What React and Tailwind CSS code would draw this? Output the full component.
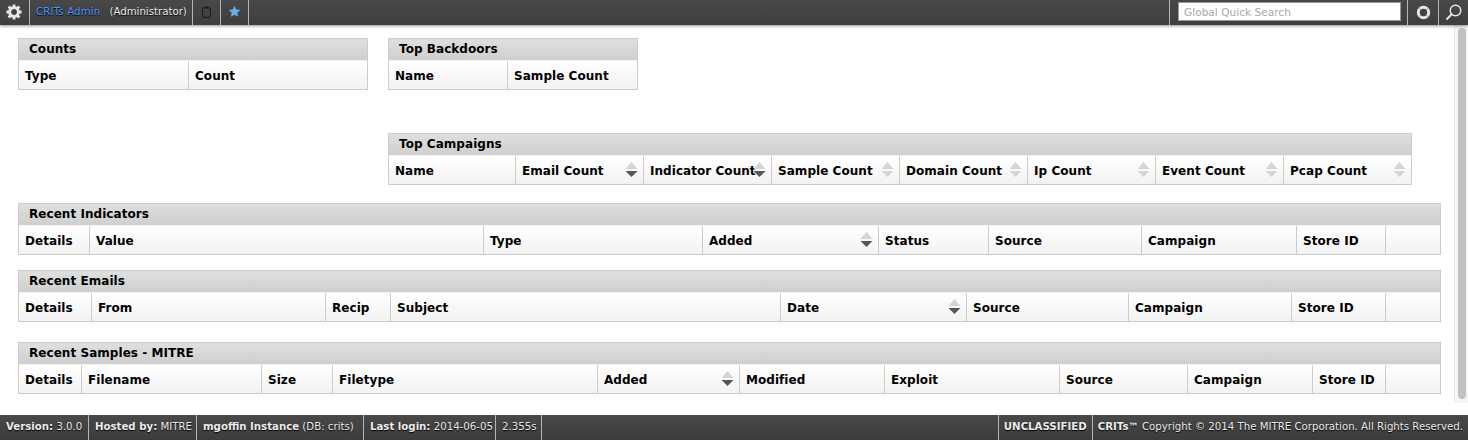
const BAR_TEXT = 'text-[10.2px] text-[#ececec] whitespace-nowrap [text-shadow:0_1px_1px_#000]';

const COUNTS = [
  { label: 'Type', w: 'w-[170px]' },
  { label: 'Count', w: 'flex-1' },
];

const BACKDOORS = [
  { label: 'Name', w: 'w-[119px]' },
  { label: 'Sample Count', w: 'flex-1' },
];

const CAMPAIGNS = [
  { label: 'Name', w: 'w-[127px]' },
  { label: 'Email Count', w: 'w-[128px]', sort: 'desc' },
  { label: 'Indicator Count', w: 'w-[128px]', sort: 'desc' },
  { label: 'Sample Count', w: 'w-[128px]', sort: 'both' },
  { label: 'Domain Count', w: 'w-[128px]', sort: 'both' },
  { label: 'Ip Count', w: 'w-[128px]', sort: 'both' },
  { label: 'Event Count', w: 'w-[128px]', sort: 'both' },
  { label: 'Pcap Count', w: 'flex-1', sort: 'both' },
];

const INDICATORS = [
  { label: 'Details', w: 'w-[71px]' },
  { label: 'Value', w: 'w-[394px]' },
  { label: 'Type', w: 'w-[219px]' },
  { label: 'Added', w: 'w-[176px]', sort: 'desc' },
  { label: 'Status', w: 'w-[110px]' },
  { label: 'Source', w: 'w-[153px]' },
  { label: 'Campaign', w: 'w-[155px]' },
  { label: 'Store ID', w: 'w-[89px]' },
  { label: '', w: 'flex-1' },
];

const EMAILS = [
  { label: 'Details', w: 'w-[73px]' },
  { label: 'From', w: 'w-[234px]' },
  { label: 'Recip', w: 'w-[65px]' },
  { label: 'Subject', w: 'w-[390px]' },
  { label: 'Date', w: 'w-[186px]', sort: 'desc' },
  { label: 'Source', w: 'w-[162px]' },
  { label: 'Campaign', w: 'w-[163px]' },
  { label: 'Store ID', w: 'w-[94px]' },
  { label: '', w: 'flex-1' },
];

const SAMPLES = [
  { label: 'Details', w: 'w-[63px]' },
  { label: 'Filename', w: 'w-[180px]' },
  { label: 'Size', w: 'w-[71px]' },
  { label: 'Filetype', w: 'w-[265px]' },
  { label: 'Added', w: 'w-[142px]', sort: 'desc' },
  { label: 'Modified', w: 'w-[145px]' },
  { label: 'Exploit', w: 'w-[175px]' },
  { label: 'Source', w: 'w-[128px]' },
  { label: 'Campaign', w: 'w-[125px]' },
  { label: 'Store ID', w: 'w-[73px]' },
  { label: '', w: 'flex-1' },
];

function SortIcon({ sort }) {
  return (
    <svg width="13" height="17" viewBox="0 0 13 17" className="absolute right-[5px] top-[5px]">
      <path d="M6.5 1 L12.5 8 H0.5 Z" fill="#d4d4d4" />
      <path d="M0.5 10 H12.5 L6.5 16 Z" fill={sort === 'desc' ? '#555555' : '#d4d4d4'} />
    </svg>
  );
}

function Panel({ title, columns, className = '' }) {
  return (
    <div className={`border border-[#cccccc] ${className}`}>
      <div className="h-[21px] pl-[10px] bg-gradient-to-b from-[#dfdfdf] to-[#cfcfcf] text-[12px] tracking-[0.05px] font-bold leading-[20px] text-black">
        {title}
      </div>
      <div className="flex h-[29px] border-t border-[#f4f4f4] bg-gradient-to-b from-white to-[#f2f2f2]">
        {columns.map((col, i) => (
          <div
            key={i}
            className={`relative ${col.w} pl-[6px] text-[12px] tracking-[0.05px] font-bold leading-[31px] text-black whitespace-nowrap ${
              i < columns.length - 1 ? 'border-r border-[#cccccc]' : ''
            }`}
          >
            {col.label}
            {col.sort && <SortIcon sort={col.sort} />}
          </div>
        ))}
      </div>
    </div>
  );
}

function BarCell({ className = '', children }) {
  return <div className={`flex h-full items-center border-r border-[#b5b5b5] ${className}`}>{children}</div>;
}

function Gear() {
  return (
    <svg width="16" height="16" viewBox="0 0 16 16" fill="none">
      <circle cx="8" cy="8" r="4.4" stroke="#e6e6e6" strokeWidth="3" />
      <path
        d="M8 0.4V3 M8 13V15.6 M0.4 8H3 M13 8H15.6 M2.6 2.6L4.5 4.5 M11.5 11.5L13.4 13.4 M2.6 13.4L4.5 11.5 M11.5 4.5L13.4 2.6"
        stroke="#e6e6e6"
        strokeWidth="2.8"
      />
    </svg>
  );
}

function Clipboard() {
  return (
    <svg width="9" height="12" viewBox="0 0 9 12" fill="none">
      <rect x="0.6" y="1.8" width="7.8" height="9.6" rx="1" stroke="#1f1f1f" strokeWidth="1.2" />
      <rect x="2.5" y="0.3" width="4" height="2.2" fill="#1f1f1f" />
    </svg>
  );
}

function Star() {
  return (
    <svg width="13" height="13" viewBox="0 0 24 24" fill="#6aaee8">
      <path d="M12 1.5l3.2 7 7.6.8-5.7 5.1 1.6 7.5L12 18.1l-6.7 3.8 1.6-7.5-5.7-5.1 7.6-.8z" />
    </svg>
  );
}

function LifeRing() {
  return (
    <svg width="15" height="15" viewBox="0 0 15 15" fill="none">
      <circle cx="7.5" cy="7.5" r="5.2" stroke="#e6e6e6" strokeWidth="3" />
      <path d="M3.4 3.4 L4.8 4.8 M11.6 3.4 L10.2 4.8 M3.4 11.6 L4.8 10.2 M11.6 11.6 L10.2 10.2" stroke="#b0b0b0" strokeWidth="1.2" />
    </svg>
  );
}

function Magnifier() {
  return (
    <svg width="17" height="17" viewBox="0 0 17 17" fill="none" stroke="#e8e8e8">
      <circle cx="10.5" cy="6.5" r="5.3" strokeWidth="1.4" />
      <path d="M7 10 L1.5 15.5" strokeWidth="2" />
    </svg>
  );
}

export default function App() {
  return (
    <div className="flex h-[440px] w-[1468px] flex-col overflow-hidden bg-white font-['DejaVu_Sans',sans-serif]">
      {/* top bar */}
      <div className="relative z-10 flex h-[25px] shrink-0 items-center bg-gradient-to-b from-[#484848] to-[#3e3e3e] shadow-[0_1px_3px_rgba(0,0,0,0.45)]">
        <BarCell className="w-[30px] justify-center pb-[1px] pr-[2px]">
          <Gear />
        </BarCell>
        <BarCell className={`w-[163px] pb-[2px] pl-[6px] ${BAR_TEXT}`}>
          <span className="text-[#4d97ff] tracking-[0.15px]">CRITs Admin</span>
          <span className="ml-[9px]">(Administrator)</span>
        </BarCell>
        <BarCell className="w-[28px] justify-center pb-[1px]">
          <Clipboard />
        </BarCell>
        <BarCell className="w-[28px] justify-center pb-[2px]">
          <Star />
        </BarCell>
        <div className="flex-1" />
        <div className="flex h-full items-center border-l border-[#b5b5b5] pb-[2px] pl-[8px] pr-[6px]">
          <input
            readOnly
            placeholder="Global Quick Search"
            className="h-[19px] w-[223px] border border-[#999999] bg-white pl-[5px] text-[10.6px] placeholder:text-[#a8a8a8] outline-none"
          />
        </div>
        <BarCell className="w-[32px] justify-center border-l border-l-[#b5b5b5] pb-[1px]">
          <LifeRing />
        </BarCell>
        <div className="flex w-[29px] justify-center">
          <Magnifier />
        </div>
      </div>

      {/* content + scrollbar */}
      <div className="flex min-h-0 flex-1">
        <div className="w-[1454px] shrink-0 pl-[18px] pt-[13px]">
          <div className="flex gap-[20px]">
            <Panel title="Counts" columns={COUNTS} className="h-[52px] w-[350px]" />
            <div>
              <Panel title="Top Backdoors" columns={BACKDOORS} className="h-[52px] w-[250px]" />
              <Panel title="Top Campaigns" columns={CAMPAIGNS} className="mt-[43px] h-[52px] w-[1024px]" />
            </div>
          </div>
          <Panel title="Recent Indicators" columns={INDICATORS} className="mt-[18px] h-[52px] w-[1423px]" />
          <Panel title="Recent Emails" columns={EMAILS} className="mt-[15px] h-[52px] w-[1423px]" />
          <Panel title="Recent Samples - MITRE" columns={SAMPLES} className="mt-[20px] h-[52px] w-[1423px]" />
        </div>
        <div className="h-[378px] flex-1 border-l border-[#e8e8e8] bg-[#f6f6f6] pl-[3px] pt-[3px]">
          <div className="h-[371px] w-[8px] rounded-[4px] bg-[#c1c1c1]" />
        </div>
      </div>

      {/* footer */}
      <div className={`flex h-[25px] shrink-0 items-center bg-gradient-to-b from-[#484848] to-[#3c3c3c] ${BAR_TEXT}`}>
        <BarCell className="w-[89px] pb-[1px] pl-[6px]">
          <b>Version:</b>&nbsp;3.0.0
        </BarCell>
        <BarCell className="w-[108px] pb-[1px] pl-[6px]">
          <b>Hosted by:</b>&nbsp;MITRE
        </BarCell>
        <BarCell className="w-[167px] pb-[1px] pl-[6px]">
          <b>mgoffin Instance</b>&nbsp;(DB: crits)
        </BarCell>
        <BarCell className="w-[132px] pb-[1px] pl-[6px]">
          <b>Last login:</b>&nbsp;2014-06-05
        </BarCell>
        <BarCell className="w-[46px] pb-[1px] pl-[6px]">2.355s</BarCell>
        <div className="flex-1" />
        <div className="flex h-full items-center border-l border-r border-[#b5b5b5] pb-[1px] px-[5px]">
          <b>UNCLASSIFIED</b>
        </div>
        <div className="flex h-full items-center pb-[1px] pl-[5px] pr-[5px]">
          <b>CRITs™</b>&nbsp;Copyright © 2014 The MITRE Corporation. All Rights Reserved.
        </div>
      </div>
    </div>
  );
}
